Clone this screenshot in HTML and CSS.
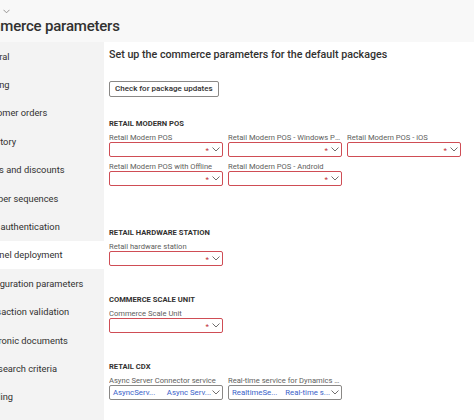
FILE: index.html
```html
<!DOCTYPE html>
<html lang="en">
<head>
<meta charset="utf-8">
<title>Commerce parameters</title>
<link rel="stylesheet" href="styles.css">
</head>
<body>
<div class="page">
  <header class="header">
    <div class="crumb">
      <svg class="crumb-chev" width="7" height="5" viewBox="0 0 7 5"><path d="M0.5 0.8 L3.5 3.8 L6.5 0.8" fill="none" stroke="#8a8886" stroke-width="0.9"/></svg>
    </div>
    <h1 class="title">Commerce parameters</h1>
  </header>
  <div class="body">
    <nav class="sidebar">
      <div class="nav-item">General</div>
      <div class="nav-item">Posting</div>
      <div class="nav-item">Customer orders</div>
      <div class="nav-item">Inventory</div>
      <div class="nav-item">Prices and discounts</div>
      <div class="nav-item">Number sequences</div>
      <div class="nav-item">Staff authentication</div>
      <div class="nav-item active">Channel deployment</div>
      <div class="nav-item">Configuration parameters</div>
      <div class="nav-item">Transaction validation</div>
      <div class="nav-item">Electronic documents</div>
      <div class="nav-item">POS search criteria</div>
      <div class="nav-item">Labeling</div>
    </nav>
    <main class="content">
      <h2 class="heading">Set up the commerce parameters for the default packages</h2>
      <button class="btn">Check for package updates</button>

      <section class="section first">
        <div class="section-title">RETAIL MODERN POS</div>
        <div class="grid">
          <div class="field">
            <div class="label">Retail Modern POS</div>
            <div class="select required"><span class="req">*</span><svg class="chev" width="8" height="5" viewBox="0 0 8 5"><path d="M0.5 0.5 L4 4 L7.5 0.5" fill="none" stroke="#605e5c" stroke-width="0.9"/></svg></div>
          </div>
          <div class="field">
            <div class="label">Retail Modern POS - Windows Phone</div>
            <div class="select required"><span class="req">*</span><svg class="chev" width="8" height="5" viewBox="0 0 8 5"><path d="M0.5 0.5 L4 4 L7.5 0.5" fill="none" stroke="#605e5c" stroke-width="0.9"/></svg></div>
          </div>
          <div class="field">
            <div class="label">Retail Modern POS - iOS</div>
            <div class="select required"><span class="req">*</span><svg class="chev" width="8" height="5" viewBox="0 0 8 5"><path d="M0.5 0.5 L4 4 L7.5 0.5" fill="none" stroke="#605e5c" stroke-width="0.9"/></svg></div>
          </div>
          <div class="field">
            <div class="label">Retail Modern POS with Offline</div>
            <div class="select required"><span class="req">*</span><svg class="chev" width="8" height="5" viewBox="0 0 8 5"><path d="M0.5 0.5 L4 4 L7.5 0.5" fill="none" stroke="#605e5c" stroke-width="0.9"/></svg></div>
          </div>
          <div class="field">
            <div class="label">Retail Modern POS - Android</div>
            <div class="select required"><span class="req">*</span><svg class="chev" width="8" height="5" viewBox="0 0 8 5"><path d="M0.5 0.5 L4 4 L7.5 0.5" fill="none" stroke="#605e5c" stroke-width="0.9"/></svg></div>
          </div>
        </div>
      </section>

      <section class="section">
        <div class="section-title">RETAIL HARDWARE STATION</div>
        <div class="grid">
          <div class="field">
            <div class="label">Retail hardware station</div>
            <div class="select required"><span class="req">*</span><svg class="chev" width="8" height="5" viewBox="0 0 8 5"><path d="M0.5 0.5 L4 4 L7.5 0.5" fill="none" stroke="#605e5c" stroke-width="0.9"/></svg></div>
          </div>
        </div>
      </section>

      <section class="section">
        <div class="section-title">COMMERCE SCALE UNIT</div>
        <div class="grid">
          <div class="field">
            <div class="label">Commerce Scale Unit</div>
            <div class="select required"><span class="req">*</span><svg class="chev" width="8" height="5" viewBox="0 0 8 5"><path d="M0.5 0.5 L4 4 L7.5 0.5" fill="none" stroke="#605e5c" stroke-width="0.9"/></svg></div>
          </div>
        </div>
      </section>

      <section class="section">
        <div class="section-title">RETAIL CDX</div>
        <div class="grid">
          <div class="field">
            <div class="label">Async Server Connector service</div>
            <div class="select"><span class="val">AsyncServ...</span><span class="val2">Async Serv...</span><svg class="chev" width="8" height="5" viewBox="0 0 8 5"><path d="M0.5 0.5 L4 4 L7.5 0.5" fill="none" stroke="#605e5c" stroke-width="0.9"/></svg></div>
          </div>
          <div class="field">
            <div class="label">Real-time service for Dynamics AX</div>
            <div class="select"><span class="val">RealtimeSe...</span><span class="val2">Real-time s...</span><svg class="chev" width="8" height="5" viewBox="0 0 8 5"><path d="M0.5 0.5 L4 4 L7.5 0.5" fill="none" stroke="#605e5c" stroke-width="0.9"/></svg></div>
          </div>
        </div>
      </section>
    </main>
  </div>
</div>
</body>
</html>
```
FILE: styles.css
```css
html, body {
  margin: 0;
  padding: 0;
  background: #ffffff;
  overflow: hidden;
}
body {
  font-family: Roboto, "Open Sans", "Liberation Sans", sans-serif;
  color: #323130;
  width: 474px;
  height: 420px;
}
.page {
  margin-left: -32px;
  width: 506px;
  height: 420px;
  display: flex;
  flex-direction: column;
}
.header {
  background: #f8f8f8;
  height: 42px;
  flex: none;
}
.crumb {
  height: 15px;
  padding-left: 35px;
  padding-top: 7px;
  box-sizing: border-box;
  display: flex;
  align-items: center;
}
.crumb-chev { display: block; }
.title {
  margin: 0;
  padding-left: 1.5px;
  font-size: 15px;
  font-weight: 500;
  letter-spacing: -0.2px;
  line-height: 22px;
  white-space: nowrap;
}
.body {
  display: flex;
  flex: 1;
  min-height: 0;
}
.sidebar {
  width: 136px;
  flex: none;
  background: #f3f3f3;
  display: flex;
  flex-direction: column;
}
.nav-item {
  height: 28.4px;
  display: flex;
  align-items: center;
  padding-left: 10px;
  font-size: 9.3px;
  color: #323130;
  white-space: nowrap;
  overflow: hidden;
}
.nav-item.active {
  background: #ffffff;
}
.content {
  flex: 1;
  padding: 5px 0 0 5px;
  min-width: 0;
}
.heading {
  margin: 0;
  font-size: 10.7px;
  font-weight: 500;
  line-height: 16px;
  white-space: nowrap;
}
.btn {
  margin-top: 18px;
  display: block;
  height: 16px;
  padding: 0 5px;
  border: 1px solid #8a8886;
  border-radius: 2px;
  background: #ffffff;
  font-family: inherit;
  font-size: 8px;
  font-weight: 500;
  color: #323130;
  line-height: 14px;
}
.section {
  margin-top: 29px;
}
.section.first {
  margin-top: 22px;
  padding-bottom: 13px;
}
.section-title {
  font-size: 7.6px;
  font-weight: 700;
  line-height: 10px;
  color: #323130;
}
.grid {
  display: grid;
  grid-template-columns: repeat(3, 114px);
  column-gap: 5px;
  row-gap: 5px;
  margin-top: 4px;
}
.field {
  min-width: 0;
}
.label {
  font-size: 7.6px;
  line-height: 10px;
  height: 9px;
  color: #605e5c;
  white-space: nowrap;
  overflow: hidden;
  text-overflow: ellipsis;
}
.select {
  height: 15px;
  box-sizing: border-box;
  border: 1px solid #8a8886;
  border-radius: 2px;
  display: flex;
  align-items: center;
  justify-content: flex-end;
  padding: 0 2px 0 3px;
  font-size: 7.8px;
}
.select.required {
  border-color: #cf4d55;
}
.req {
  color: #c03038;
  font-size: 8px;
  margin-right: 3px;
  line-height: 8px;
  padding-top: 2px;
}
.val {
  color: #3a62c8;
  margin-right: auto;
  white-space: nowrap;
}
.val2 {
  color: #3a62c8;
  margin-right: 1px;
  white-space: nowrap;
}
.chev {
  display: block;
  flex: none;
}
```
